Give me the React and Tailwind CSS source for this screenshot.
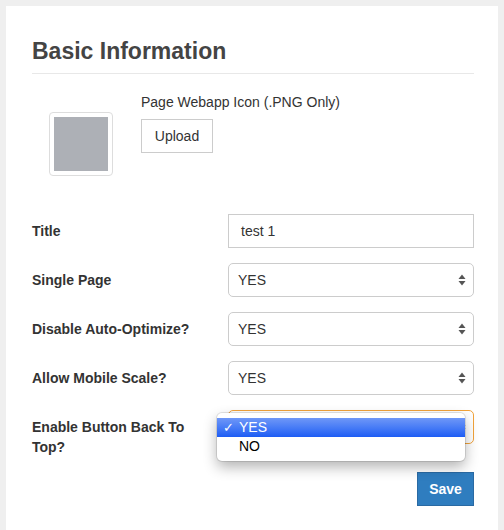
import React from "react";

const font = { fontFamily: '"Liberation Sans", Arial, sans-serif' };

function Arrows() {
    return (
        <svg width="8" height="12" viewBox="0 0 8 12" className="shrink-0">
            <path d="M4 0.5 L7.5 5 L0.5 5 Z" fill="#555" />
            <path d="M4 11.5 L7.5 7 L0.5 7 Z" fill="#555" />
        </svg>
    );
}

function SelectBox({ value, focused, children }) {
    return (
        <div className="relative w-[246px] shrink-0">
            <div
                className={`flex h-[34px] items-center justify-between rounded-[5px] border bg-white pl-[9px] pr-[7px] text-[14px] text-[#333] ${
                    focused ? "border-[#f2a33a]" : "border-[#cccccc]"
                }`}
            >
                <span>{value}</span>
                <Arrows />
            </div>
            {children}
        </div>
    );
}

function Row({ label, children }) {
    return (
        <div className="flex items-start">
            <div className="w-[196px] shrink-0 pt-[7px] text-[14px] font-bold leading-[20px] text-[#333]">{label}</div>
            {children}
        </div>
    );
}

export default function App() {
    return (
        <div className="min-h-[530px] bg-[#efefef] pl-[6px] pr-[6px] pt-[6px]" style={font}>
            <div className="min-h-[524px] bg-white pl-[26px] pr-[24px] pt-[30px]">
                <h3 className="text-[23px] font-bold leading-[30px] text-[#444]">Basic Information</h3>
                <div className="mt-[7px] border-t border-[#e8e8e8]" />

                <div className="mt-[20px] flex">
                    <div className="ml-[17px] mt-[18px] h-[64px] w-[64px] rounded-[4px] border border-[#dddddd] p-[4px]">
                        <div className="h-full w-full bg-[#adb0b6]" />
                    </div>
                    <div className="ml-[28px]">
                        <div className="text-[14px] leading-[16px] text-[#333]">Page Webapp Icon (.PNG Only)</div>
                        <button className="mt-[9px] h-[34px] w-[72px] border border-[#cccccc] bg-white text-[14px] text-[#333]">
                            Upload
                        </button>
                    </div>
                </div>

                <div className="mt-[38px] flex flex-col gap-[15px]">
                    <Row label="Title">
                        <div className="flex h-[34px] w-[246px] shrink-0 items-center border border-[#cccccc] bg-white pl-[12px] text-[14px] text-[#333]">
                            test 1
                        </div>
                    </Row>
                    <Row label="Single Page">
                        <SelectBox value="YES" />
                    </Row>
                    <Row label="Disable Auto-Optimize?">
                        <SelectBox value="YES" />
                    </Row>
                    <Row label="Allow Mobile Scale?">
                        <SelectBox value="YES" />
                    </Row>
                    <Row label={<>Enable Button Back To<br />Top?</>}>
                        <SelectBox value="YES" focused>
                            <div className="absolute left-[-11px] top-[3px] w-[248px] rounded-[5px] bg-white py-[5px] text-[14px] text-black shadow-[0_6px_14px_rgba(0,0,0,0.3)] ring-1 ring-black/10">
                                <div className="flex h-[19px] items-center bg-gradient-to-b from-[#6f97f7] to-[#1c5cf4] text-white">
                                    <span className="w-[22px] pl-[6px] text-[13px]">✓</span>
                                    <span>YES</span>
                                </div>
                                <div className="flex h-[19px] items-center">
                                    <span className="w-[22px]" />
                                    <span>NO</span>
                                </div>
                            </div>
                        </SelectBox>
                    </Row>
                </div>

                <div className="mt-[15px] flex justify-end">
                    <button className="h-[34px] w-[57px] border border-[#2a6aa3] bg-[#2f7dbf] text-[14px] font-bold text-white">
                        Save
                    </button>
                </div>
            </div>
        </div>
    );
}
